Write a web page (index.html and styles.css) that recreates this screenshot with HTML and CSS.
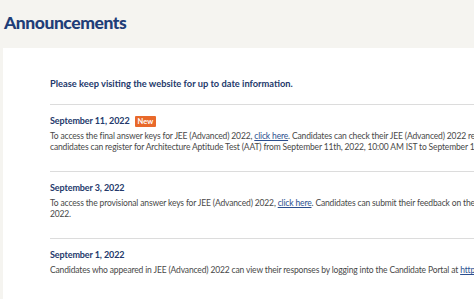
FILE: index.html
```html
<!DOCTYPE html>
<html>
<head>
<meta charset="utf-8">
<link rel="stylesheet" href="styles.css">
</head>
<body>
<div class="page">
  <header class="head"><h1 class="title">Announcements</h1></header>
  <main class="panel">
    <p class="intro">Please keep visiting the website for up to date information.</p>
    <section class="item">
      <h2 class="date">September 11, 2022 <span class="badge">New</span></h2>
      <p class="text">To access the final answer keys for JEE (Advanced) 2022, <a href="#">click here</a>. Candidates can check their JEE (Advanced) 2022 results. Qualified<br>candidates can register for Architecture Aptitude Test (AAT) from September 11th, 2022, 10:00 AM IST to September 12th, 2022, 05:00 PM IST.</p>
    </section>
    <section class="item">
      <h2 class="date">September 3, 2022</h2>
      <p class="text">To access the provisional answer keys for JEE (Advanced) 2022, <a href="#">click here</a>. Candidates can submit their feedback on the provisional answer keys till September 4th,<br>2022.</p>
    </section>
    <section class="item">
      <h2 class="date">September 1, 2022</h2>
      <p class="text">Candidates who appeared in JEE (Advanced) 2022 can view their responses by logging into the Candidate Portal at <a href="#">https://jeeadv.ac.in</a></p>
    </section>
  </main>
</div>
</body>
</html>
```
FILE: styles.css
```css
html, body { margin: 0; padding: 0; }
body {
  background: #f5f4f0;
  font-family: Lato, "Noto Sans", sans-serif;
  width: 474px;
  height: 299px;
  overflow: hidden;
}
.page { width: 474px; }
.head {
  height: 48px;
  padding: 0 0 0 4px;
  box-sizing: border-box;
  background: #f5f4f0;
}
.title {
  margin: 0;
  padding-top: 11px;
  font-size: 17.5px;
  line-height: 24px;
  font-weight: 900;
  letter-spacing: -0.45px;
  color: #1f3e78;
}
.panel {
  margin-left: 3px;
  background: #fff;
  padding: 29px 0 0 47px;
  height: 222px;
  overflow: hidden;
}
.intro {
  margin: 0 0 13px;
  font-size: 9.3px;
  line-height: 14px;
  font-weight: 700;
  color: #24396b;
  white-space: nowrap;
}
.item {
  border-top: 1px solid #dcdcdc;
  padding: 9px 0 18px;
  width: 700px;
}
.date {
  margin: 0 0 3px;
  font-size: 9px;
  line-height: 14px;
  font-weight: 700;
  letter-spacing: -0.1px;
  color: #24396b;
  display: flex;
  align-items: center;
  gap: 5px;
}
.badge {
  background: #e8692b;
  color: #fff;
  font-size: 7.5px;
  font-weight: 700;
  padding: 0 3px;
  line-height: 11px;
  letter-spacing: 0;
  border-radius: 1px;
}
.text {
  margin: 0;
  font-size: 8.5px;
  line-height: 11px;
  letter-spacing: -0.15px;
  color: #484848;
  white-space: nowrap;
}
.text a { color: #2b4f8f; }
```
